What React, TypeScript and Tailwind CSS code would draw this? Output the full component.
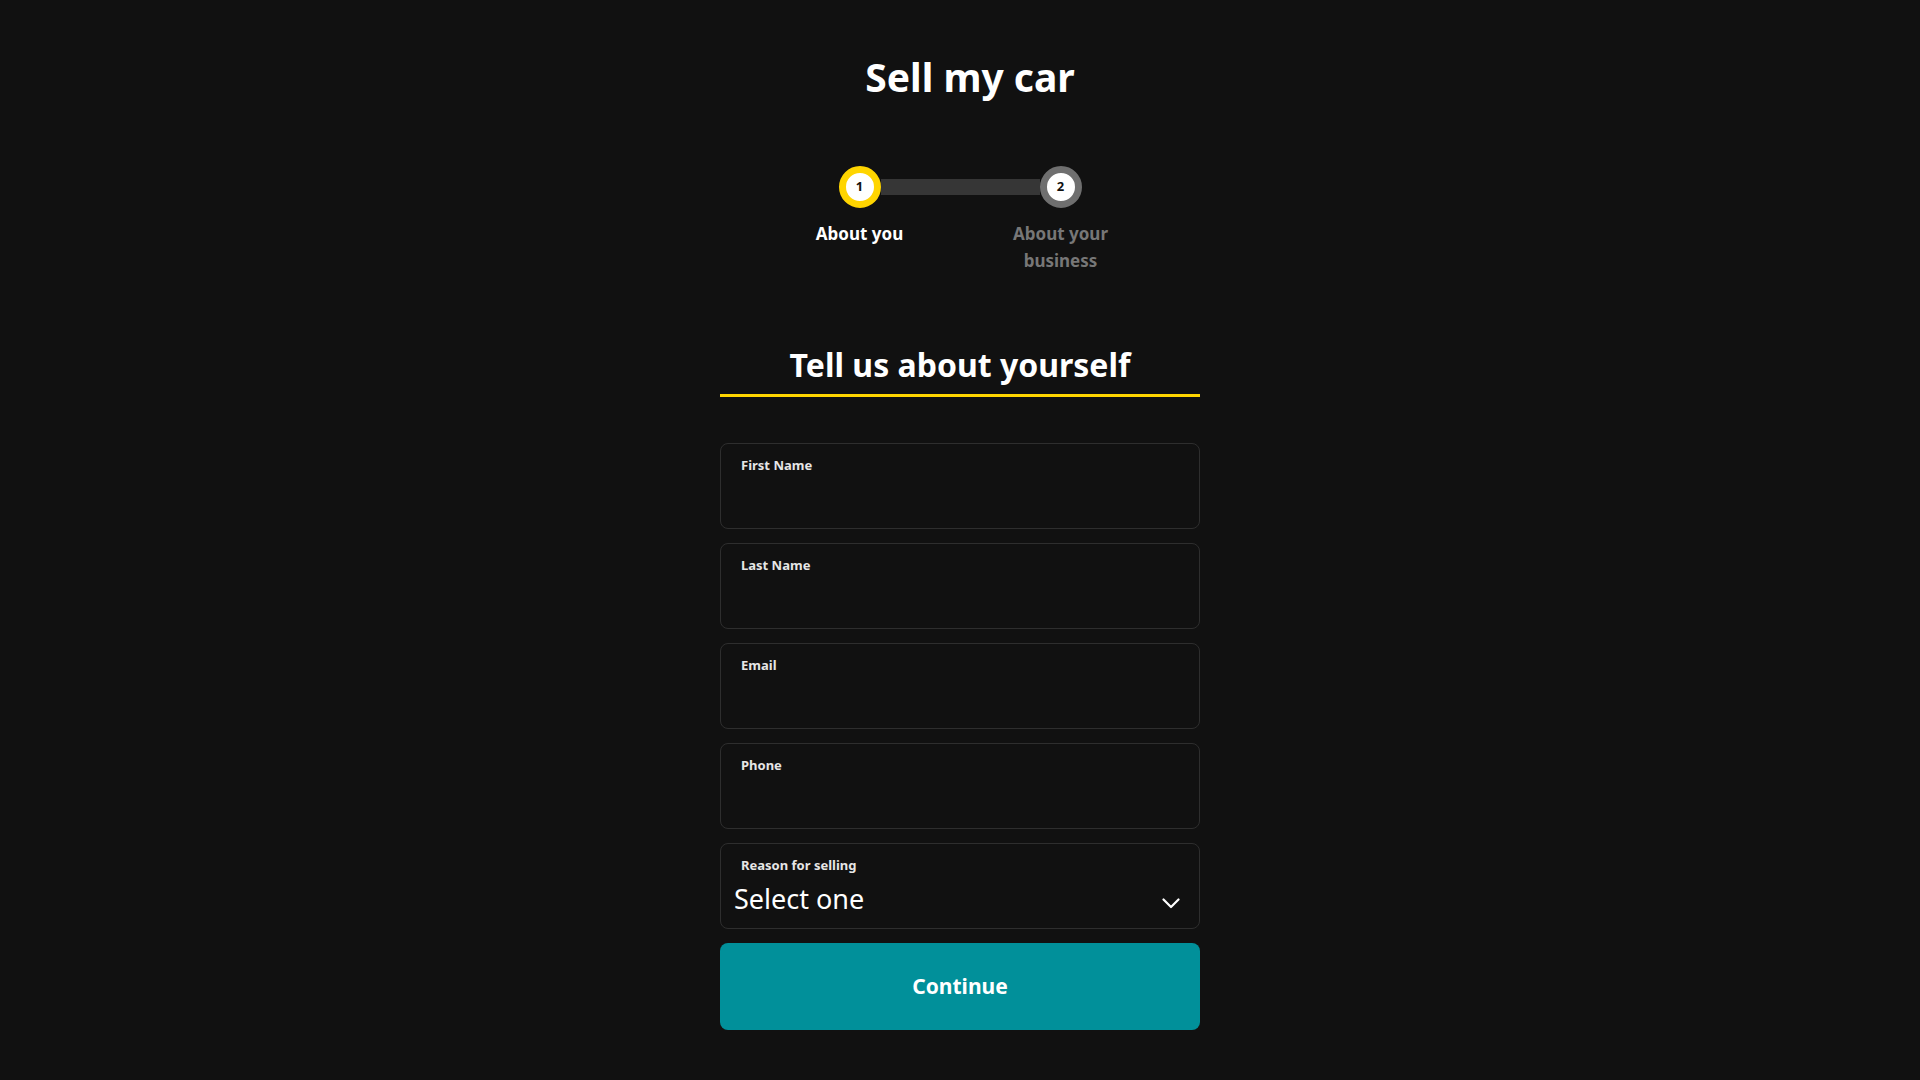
const font = { fontFamily: '"Noto Sans", "Liberation Sans", sans-serif' };

function Field({ label }: { label: string }) {
  return (
    <label className="flex h-[86px] w-full flex-col rounded-[8px] border border-[#2e2e2e] px-5 pt-[12px]">
      <span className="text-[13px] font-bold leading-[18px] text-[#e6e6e6]">{label}</span>
      <input className="mt-1 w-full bg-transparent text-[20px] text-white outline-none" />
    </label>
  );
}

function StepCircle({ n, active }: { n: number; active: boolean }) {
  return (
    <div
      className={`flex h-[42px] w-[42px] shrink-0 items-center justify-center rounded-full border-[7px] bg-white text-[13px] font-bold text-[#111] ${
        active ? "border-[#ffd500]" : "border-[#6f6f6f]"
      }`}
    >
      {n}
    </div>
  );
}

export default function App() {
  return (
    <div className="min-h-screen w-full bg-[#111111] text-white" style={font}>
      <main className="mx-auto flex w-[480px] flex-col items-stretch pt-[49px]">
        <h1 className="pl-5 text-center text-[39px] font-bold leading-[56px]">Sell my car</h1>

        <div className="mt-[61px] flex items-center justify-center">
          <StepCircle n={1} active />
          <div className="h-4 w-[159px] bg-[#363636]" />
          <StepCircle n={2} active={false} />
        </div>
        <div className="mt-[12px] flex justify-center gap-[81px] text-[17px] font-bold leading-[27px]">
          <div className="w-[120px] text-center text-white">About you</div>
          <div className="w-[120px] text-center text-[#777777]">
            About your
            <br />
            business
          </div>
        </div>

        <h2 className="mt-[69px] text-center text-[32px] font-bold leading-[44px]">Tell us about yourself</h2>
        <div className="mt-[7px] h-[3px] w-full bg-[#ffd500]" />

        <form className="mt-[46px] flex flex-col gap-[14px]">
          <Field label="First Name" />
          <Field label="Last Name" />
          <Field label="Email" />
          <Field label="Phone" />
          <div className="flex h-[86px] w-full flex-col rounded-[8px] border border-[#2e2e2e] pt-[12px]">
            <span className="px-5 text-[13px] font-bold leading-[18px] text-[#e6e6e6]">Reason for selling</span>
            <div className="mt-[6px] flex items-center justify-between pl-[13px] pr-[19px]">
              <span className="text-[27px] leading-[38px] text-white">Select one</span>
              <svg width="18" height="11" viewBox="0 0 18 11" fill="none" className="mt-2" aria-hidden>
                <path d="M1.5 1.5 9 9l7.5-7.5" stroke="white" strokeWidth="2.2" strokeLinecap="round" strokeLinejoin="round" />
              </svg>
            </div>
          </div>
          <button
            type="button"
            className="flex h-[87px] w-full items-center justify-center rounded-[8px] bg-[#01909a] text-[21px] font-bold text-white"
          >
            Continue
          </button>
        </form>
      </main>
    </div>
  );
}
